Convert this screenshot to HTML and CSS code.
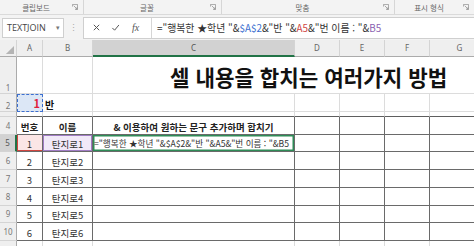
FILE: index.html
```html
<!DOCTYPE html>
<html lang="ko">
<head>
    <meta charset="UTF-8">
    <title>셀 내용을 합치는 여러가지 방법</title>
    <link rel="stylesheet" href="styles.css">
</head>
<body>

    <!-- Ribbon group labels -->
    <div class="ribbon">
        <div class="group g1"><span class="label">클립보드</span><svg class="launcher" viewBox="0 0 7 7"><path d="M0.5 3V0.5H6.5V6.5H4" fill="none" stroke="#9a9a9a"/><path d="M2 2L6 6M6 3.5V6H3.5" fill="none" stroke="#9a9a9a"/></svg></div>
        <div class="group g2"><span class="label">글꼴</span><svg class="launcher" viewBox="0 0 7 7"><path d="M0.5 3V0.5H6.5V6.5H4" fill="none" stroke="#9a9a9a"/><path d="M2 2L6 6M6 3.5V6H3.5" fill="none" stroke="#9a9a9a"/></svg></div>
        <div class="group g3"><span class="label">맞춤</span><svg class="launcher" viewBox="0 0 7 7"><path d="M0.5 3V0.5H6.5V6.5H4" fill="none" stroke="#9a9a9a"/><path d="M2 2L6 6M6 3.5V6H3.5" fill="none" stroke="#9a9a9a"/></svg></div>
        <div class="group g4"><span class="label">표시 형식</span><svg class="launcher" viewBox="0 0 7 7"><path d="M0.5 3V0.5H6.5V6.5H4" fill="none" stroke="#9a9a9a"/><path d="M2 2L6 6M6 3.5V6H3.5" fill="none" stroke="#9a9a9a"/></svg></div>
    </div>

    <!-- Formula bar -->
    <div class="formula-bar">
        <div class="name-box"><span>TEXTJOIN</span><span class="caret">▾</span></div>
        <div class="grip">⋮</div>
        <div class="fx-area">
            <div class="fx-buttons">
                <svg class="btn-icon" viewBox="0 0 10 10"><path d="M2 2L8 8M8 2L2 8" stroke="#555" stroke-width="1.1" fill="none"/></svg>
                <svg class="btn-icon" viewBox="0 0 10 10"><path d="M1.5 5.5L4 8L8.8 2.2" stroke="#555" stroke-width="1.1" fill="none"/></svg>
                <span class="fx">fx</span>
            </div>
            <div class="formula">="행복한 ★학년 "&amp;<span class="ref-a2">$A$2</span>&amp;"반 "&amp;<span class="ref-a5">A5</span>&amp;"번 이름 : "&amp;<span class="ref-b5">B5</span></div>
        </div>
    </div>

    <!-- Worksheet -->
    <table class="sheet">
        <colgroup>
            <col class="c-rh">
            <col class="c-a">
            <col class="c-b">
            <col class="c-c">
            <col class="c-d">
            <col class="c-d">
            <col class="c-d">
            <col class="c-g">
        </colgroup>
        <tr class="hdr">
            <th class="corner"><svg viewBox="0 0 10 10"><path d="M10 1V10H1Z" fill="#b4b4b4"/></svg></th>
            <th>A</th><th>B</th><th class="active-col">C</th><th>D</th><th>E</th><th>F</th><th>G</th>
        </tr>
        <tr class="r1">
            <th class="rh">1</th>
            <td></td><td></td>
            <td colspan="5" class="title">셀 내용을 합치는 여러가지 방법</td>
        </tr>
        <tr class="r2">
            <th class="rh">2</th>
            <td class="ref-cell-a2">1</td>
            <td class="ban">반</td>
            <td></td><td></td><td></td><td></td><td></td>
        </tr>
        <tr class="r3">
            <th class="rh"></th>
            <td class="top"></td><td class="top"></td><td class="top"></td><td class="top"></td><td class="top"></td><td class="top"></td><td class="top"></td>
        </tr>
        <tr class="row head">
            <th class="rh">4</th>
            <td class="box mid">번호</td>
            <td class="box mid">이름</td>
            <td class="box mid">&amp; 이용하여 원하는 문구 추가하며 합치기</td>
            <td class="box"></td><td class="box"></td><td class="box"></td><td class="box"></td>
        </tr>
        <tr class="row short">
            <th class="rh active-row">5</th>
            <td class="box mid ref-cell-a5">1</td>
            <td class="box mid ref-cell-b5">탄지로1</td>
            <td class="box editing"><div class="edit-text">="행복한 ★학년 "&amp;$A$2&amp;"반 "&amp;A5&amp;"번 이름 : "&amp;B5</div></td>
            <td class="box"></td><td class="box"></td><td class="box"></td><td class="box"></td>
        </tr>
        <tr class="row">
            <th class="rh">6</th>
            <td class="box mid">2</td><td class="box mid">탄지로2</td>
            <td class="box"></td><td class="box"></td><td class="box"></td><td class="box"></td><td class="box"></td>
        </tr>
        <tr class="row">
            <th class="rh">7</th>
            <td class="box mid">3</td><td class="box mid">탄지로3</td>
            <td class="box"></td><td class="box"></td><td class="box"></td><td class="box"></td><td class="box"></td>
        </tr>
        <tr class="row">
            <th class="rh">8</th>
            <td class="box mid">4</td><td class="box mid">탄지로4</td>
            <td class="box"></td><td class="box"></td><td class="box"></td><td class="box"></td><td class="box"></td>
        </tr>
        <tr class="row short">
            <th class="rh">9</th>
            <td class="box mid">5</td><td class="box mid">탄지로5</td>
            <td class="box"></td><td class="box"></td><td class="box"></td><td class="box"></td><td class="box"></td>
        </tr>
        <tr class="row">
            <th class="rh">10</th>
            <td class="box mid">6</td><td class="box mid">탄지로6</td>
            <td class="box"></td><td class="box"></td><td class="box"></td><td class="box"></td><td class="box"></td>
        </tr>
        <tr class="row">
            <th class="rh"></th>
            <td></td><td></td><td></td><td></td><td></td><td></td><td></td>
        </tr>
    </table>

</body>
</html>
```

FILE: styles.css
```css
body {
    margin: 0;
    width: 474px;
    height: 246px;
    overflow: hidden;
    background: #ffffff;
    font-family: "Noto Sans CJK KR", "Noto Sans", sans-serif;
    color: #333;
}

/* Ribbon group labels */
.ribbon {
    display: flex;
    height: 14px;
    background: #f3f3f3;
    border-bottom: 1px solid #dadada;
    font-size: 7.5px;
    color: #666;
}
.group {
    display: flex;
    align-items: center;
    border-right: 1px solid #d6d6d6;
    box-sizing: border-box;
}
.g1 { width: 84px; }
.g2 { width: 138px; }
.g3 { width: 173px; }
.g4 { width: 79px; border-right: none; }
.label {
    flex: 1;
    text-align: center;
}
.launcher {
    width: 6px;
    height: 6px;
    margin-right: 5px;
}

/* Formula bar */
.formula-bar {
    display: flex;
    align-items: center;
    height: 25px;
    background: #f3f3f3;
    padding: 0 0 0 2px;
}
.name-box {
    display: flex;
    align-items: center;
    justify-content: space-between;
    width: 62px;
    height: 20px;
    box-sizing: border-box;
    background: #fff;
    border: 1px solid #cfcfcf;
    padding: 0 3px 0 4px;
    font-family: "Open Sans", "Noto Sans", sans-serif;
    font-size: 9px;
    color: #444;
}
.caret {
    font-size: 7px;
    color: #777;
}
.grip {
    width: 19px;
    text-align: center;
    font-size: 9px;
    color: #aaa;
}
.fx-area {
    flex: 1;
    display: flex;
    align-items: center;
    height: 20px;
    background: #fff;
    border: 1px solid #cfcfcf;
    border-right: none;
}
.fx-buttons {
    display: flex;
    align-items: center;
    width: 68px;
    padding-left: 8px;
    box-sizing: border-box;
    gap: 10px;
    height: 100%;
    border-right: 1px solid #d6d6d6;
}
.btn-icon {
    width: 9px;
    height: 9px;
}
.fx {
    font-family: "Liberation Serif", serif;
    font-style: italic;
    font-size: 10px;
    color: #555;
    margin-left: 2px;
}
.formula {
    padding-left: 5px;
    font-size: 9.9px;
    color: #333;
    white-space: nowrap;
}
.ref-a2 { color: #3c6fd0; }
.ref-a5 { color: #d0453f; }
.ref-b5 { color: #8a5fb0; }

/* Worksheet grid */
.sheet {
    table-layout: fixed;
    border-collapse: separate;
    border-spacing: 0;
    width: 490px;
    font-size: 9.5px;
}
.c-rh { width: 17px; }
.c-a { width: 26px; }
.c-b { width: 50px; }
.c-c { width: 202px; }
.c-d { width: 45px; }
.c-g { width: 60px; }

.sheet th,
.sheet td {
    box-sizing: border-box;
    padding: 0 2px;
    border-right: 1px solid #dcdcdc;
    border-bottom: 1px solid #dcdcdc;
    vertical-align: bottom;
    white-space: nowrap;
    overflow: hidden;
    line-height: 1.25;
}
.hdr { height: 17px; }
.hdr th {
    background: #efefef;
    font-family: "Noto Sans", sans-serif;
    font-weight: normal;
    font-size: 8px;
    color: #666;
    vertical-align: middle;
    border-right-color: #d4d4d4;
    border-bottom-color: #ababab;
}
.corner svg {
    width: 9px;
    height: 9px;
    display: block;
    margin: 2px 0 0 3px;
}
.hdr th.active-col {
    background: #d2d2d2;
    border-bottom: 2px solid #217346;
    color: #555;
}
.sheet th.rh {
    background: #efefef;
    font-family: "Noto Sans", sans-serif;
    font-weight: normal;
    font-size: 8px;
    color: #777;
    padding: 0;
    text-align: center;
    border-right-color: #ababab;
    border-bottom-color: #d4d4d4;
    vertical-align: middle;
}
.r1 th.rh,
.r2 th.rh { vertical-align: bottom; }
.sheet th.active-row {
    background: #d2d2d2;
    border-right: 2px solid #217346;
    color: #555;
}

.r1 { height: 37px; }
.r2 { height: 18px; }
.r3 { height: 5px; }
.row { height: 18px; }
.row.short { height: 17px; }

.sheet td.title {
    text-align: left;
    padding-left: 77px;
    font-size: 21.2px;
    font-weight: bold;
    color: #111;
    line-height: 1.5;
}
.ref-cell-a2 {
    background: #dce7f6;
    outline: 1px dashed #3c6fd0;
    outline-offset: -1px;
    text-align: right;
    color: #e0203a;
    font-weight: bold;
    font-size: 11px;
}
.ban {
    font-weight: bold;
    color: #111;
    font-size: 10px;
}

/* Boxed table, rows 4-10 */
.sheet td.top { border-bottom-color: #5e5e5e; }
.sheet td.box {
    border-right-color: #6a6a6a;
    border-bottom-color: #6a6a6a;
}
.mid {
    text-align: center;
    vertical-align: middle;
}
.head td {
    font-weight: bold;
    color: #222;
    font-size: 9.5px;
}
.sheet td.ref-cell-a5 {
    background: #fbe6e6;
    box-shadow: inset 1px 0 0 #d0453f, inset 0 -1px 0 #d0453f;
}
.sheet td.ref-cell-b5 {
    background: #f1e9f8;
    box-shadow: inset 0 0 0 1px #a07cc4;
}
.sheet td.editing {
    box-shadow: inset 0 0 0 1.5px #2e8b57;
    padding: 0 0 0 1px;
    vertical-align: middle;
}
.edit-text {
    font-size: 8.6px;
    color: #333;
    overflow: hidden;
}
```
